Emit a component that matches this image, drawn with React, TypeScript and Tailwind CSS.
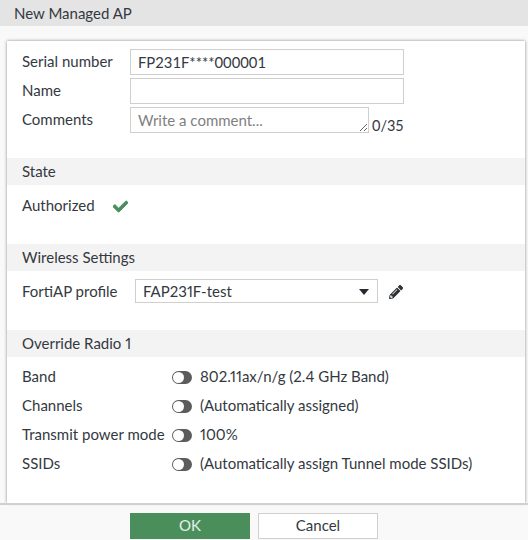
import { FaCheck, FaPencilAlt } from "react-icons/fa";

const OVERRIDES = [
  { label: "Band", value: "802.11ax/n/g (2.4 GHz Band)" },
  { label: "Channels", value: "(Automatically assigned)" },
  { label: "Transmit power mode", value: "100%" },
  { label: "SSIDs", value: "(Automatically assign Tunnel mode SSIDs)" },
];

function SectionTitle({ children }: { children: string }) {
  return <div className="h-[27px] bg-[#f3f3f3] pl-[15px] leading-[27px]">{children}</div>;
}

function Toggle() {
  return (
    <span className="flex h-[13px] w-5 shrink-0 items-center rounded-full bg-[#5c5c5c] pl-px">
      <span className="h-[11px] w-[11px] rounded-full bg-white" />
    </span>
  );
}

export default function App() {
  return (
    <div className="flex h-[540px] w-[528px] flex-col overflow-hidden bg-[#f9f9f9] font-['Lato','Liberation_Sans',sans-serif] text-[15px] text-[#34393f] proportional-nums">
      {/* Title bar */}
      <div className="h-[26px] shrink-0 bg-[#e4e4e4] pl-[14px] leading-[27px]">New Managed AP</div>

      {/* Form panel */}
      <div className="mt-[15px] mr-[3px] ml-[7px] h-[462px] shrink-0 bg-white shadow-[0_0_3px_rgba(0,0,0,0.45)]">
        <div className="flex h-[117px] flex-col gap-[3px] pt-2 pl-[15px]">
          <div className="flex h-[26px] items-start">
            <span className="w-[108px] leading-[25px]">Serial number</span>
            <input
              readOnly
              value="FP231F****000001"
              className="h-[26px] w-[274px] border border-[#cfcfcf] px-[7px] text-[14.8px] tabular-nums outline-none"
            />
          </div>
          <div className="flex h-[26px] items-start">
            <span className="w-[108px] leading-[25px]">Name</span>
            <input readOnly className="h-[26px] w-[274px] border border-[#cfcfcf] px-2 outline-none" />
          </div>
          <div className="flex h-[26px] items-start">
            <span className="w-[108px] leading-[25px]">Comments</span>
            <textarea
              readOnly
              placeholder="Write a comment..."
              className="h-[26px] w-[239px] border border-[#cfcfcf] px-[7px] py-0 leading-[24px] outline-none placeholder:text-[#7f7f7f]"
            />
            <span className="mt-[7px] ml-[3px] text-[14.5px] leading-[24px] tabular-nums">0/35</span>
          </div>
        </div>

        <SectionTitle>State</SectionTitle>
        <div className="flex h-[59px] items-start pt-2 pl-[15px]">
          <span className="w-[91px] leading-[24px]">Authorized</span>
          <FaCheck className="mt-[6px] stroke-[30px] text-[15px] text-[#4a8f5b]" />
        </div>

        <SectionTitle>Wireless Settings</SectionTitle>
        <div className="flex h-[59px] items-start pt-2 pl-[15px]">
          <span className="w-[113px] leading-[25px]">FortiAP profile</span>
          <div className="flex h-6 w-[243px] items-center justify-between border border-[#cfcfcf] pr-2 pl-[7px]">
            <span className="leading-[23px]">FAP231F-test</span>
            <svg width="10" height="6" viewBox="0 0 10 6" className="mt-px">
              <path d="M0 0h10L5 6z" fill="#26292d" />
            </svg>
          </div>
          <FaPencilAlt className="mt-[6px] ml-[11px] text-[14px] text-[#2c3034]" />
        </div>

        <SectionTitle>Override Radio 1</SectionTitle>
        <div className="flex flex-col gap-[5px] pt-[8px] pl-[15px]">
          {OVERRIDES.map((row) => (
            <div key={row.label} className="flex h-6 items-center leading-[24px]">
              <span className="w-[150px] pb-[2px] whitespace-nowrap">{row.label}</span>
              <Toggle />
              <span className="ml-2 pb-[2px] whitespace-nowrap">{row.value}</span>
            </div>
          ))}
        </div>
      </div>

      {/* Footer buttons */}
      <div className="flex flex-1 justify-start gap-2 border-t-2 border-[#d0d0d0] pt-[8px] pl-[130px]">
        <button className="h-[26px] w-[120px] bg-[#4a8f5b] pb-px text-[#e6f0e8]">OK</button>
        <button className="h-[26px] w-[120px] border border-[#cfcfcf] bg-white pb-px">Cancel</button>
      </div>
    </div>
  );
}
